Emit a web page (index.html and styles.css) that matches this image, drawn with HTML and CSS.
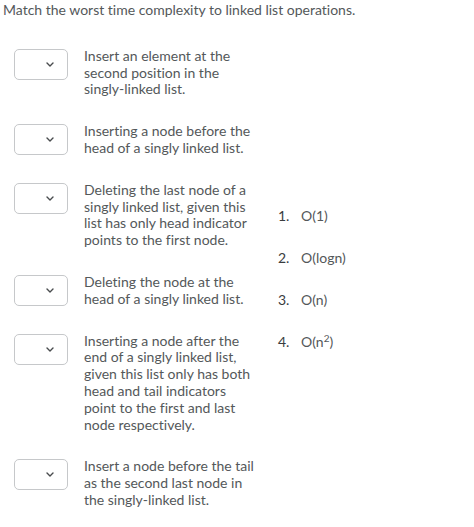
FILE: index.html
```html
<!DOCTYPE html>
<html>
<head>
<meta charset="utf-8">
<link rel="stylesheet" href="styles.css">
</head>
<body>
<p class="title">Match the worst time complexity to linked list operations.</p>
<div class="match">
  <div class="rows">
    <div class="row">
      <div class="select"><svg class="chev" viewBox="0 0 8 5" width="8" height="5"><path d="M1 1 L4 4 L7 1" fill="none" stroke="#494c4e" stroke-width="1.4" stroke-linecap="round" stroke-linejoin="round"/></svg></div>
      <div class="text">Insert an element at the second position in the singly-linked list.</div>
    </div>
    <div class="row">
      <div class="select"><svg class="chev" viewBox="0 0 8 5" width="8" height="5"><path d="M1 1 L4 4 L7 1" fill="none" stroke="#494c4e" stroke-width="1.4" stroke-linecap="round" stroke-linejoin="round"/></svg></div>
      <div class="text">Inserting a node before the head of a singly linked list.</div>
    </div>
    <div class="row">
      <div class="select"><svg class="chev" viewBox="0 0 8 5" width="8" height="5"><path d="M1 1 L4 4 L7 1" fill="none" stroke="#494c4e" stroke-width="1.4" stroke-linecap="round" stroke-linejoin="round"/></svg></div>
      <div class="text">Deleting the last node of a singly linked list, given this list has only head indicator points to the first node.</div>
    </div>
    <div class="row">
      <div class="select"><svg class="chev" viewBox="0 0 8 5" width="8" height="5"><path d="M1 1 L4 4 L7 1" fill="none" stroke="#494c4e" stroke-width="1.4" stroke-linecap="round" stroke-linejoin="round"/></svg></div>
      <div class="text">Deleting the node at the head of a singly linked list.</div>
    </div>
    <div class="row">
      <div class="select"><svg class="chev" viewBox="0 0 8 5" width="8" height="5"><path d="M1 1 L4 4 L7 1" fill="none" stroke="#494c4e" stroke-width="1.4" stroke-linecap="round" stroke-linejoin="round"/></svg></div>
      <div class="text">Inserting a node after the end of a singly linked list, given this list only has both head and tail indicators point to the first and last node respectively.</div>
    </div>
    <div class="row">
      <div class="select"><svg class="chev" viewBox="0 0 8 5" width="8" height="5"><path d="M1 1 L4 4 L7 1" fill="none" stroke="#494c4e" stroke-width="1.4" stroke-linecap="round" stroke-linejoin="round"/></svg></div>
      <div class="text">Insert a node before the tail as the second last node in the singly-linked list.</div>
    </div>
  </div>
  <ol class="choices">
    <li><span class="num">1.</span><span>O(1)</span></li>
    <li><span class="num">2.</span><span>O(logn)</span></li>
    <li><span class="num">3.</span><span>O(n)</span></li>
    <li><span class="num">4.</span><span>O(n<sup>2</sup>)</span></li>
  </ol>
</div>
</body>
</html>
```
FILE: styles.css
```css
html, body {
  margin: 0;
  padding: 0;
  background: #ffffff;
}
body {
  font-family: Lato, "Noto Sans", sans-serif;
  font-size: 14px;
  line-height: 16.8px;
  color: #54585a;
  font-variant-ligatures: none;
}
.title {
  margin: 0;
  padding: 2px 0 0 3px;
}
.match {
  display: flex;
  align-items: center;
  margin-top: 29px;
}
.rows {
  display: flex;
  flex-direction: column;
  gap: 25px;
}
.row {
  display: flex;
  align-items: flex-start;
}
.select {
  box-sizing: border-box;
  width: 54px;
  height: 31px;
  margin: 1px 0 0 14px;
  border: 1px solid #c6c8ca;
  border-radius: 5px;
  display: flex;
  align-items: center;
  justify-content: flex-end;
  padding-right: 13px;
}
.chev {
  display: block;
}
.text {
  margin-left: 16px;
  width: 172px;
}
.choices {
  list-style: none;
  margin: 0 0 0 22px;
  padding: 0;
  display: flex;
  flex-direction: column;
  gap: 25px;
}
.choices li {
  display: flex;
  line-height: 17px;
}
.num {
  width: 23px;
  color: #3a3c3e;
}
sup {
  font-size: 10px;
  line-height: 0;
  vertical-align: 5px;
}
```
